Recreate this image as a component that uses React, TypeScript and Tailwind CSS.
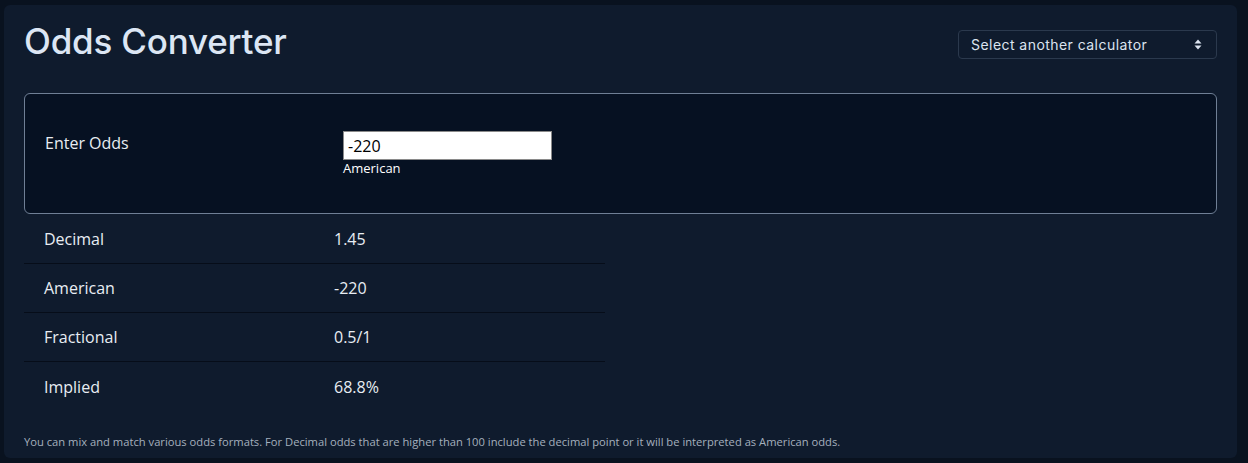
const rows = [
  { label: "Decimal", value: "1.45" },
  { label: "American", value: "-220" },
  { label: "Fractional", value: "0.5/1" },
  { label: "Implied", value: "68.8%" },
]

function SortIcon() {
  return (
    <svg width="8" height="11" viewBox="0 0 8 11" className="fill-[#dce4f0]">
      <path d="M4 0.5 L7.5 4.5 H0.5 Z" />
      <path d="M4 10.5 L7.5 6.5 H0.5 Z" />
    </svg>
  )
}

export default function App() {
  return (
    <div className="h-[463px] w-[1248px] bg-[#09121f] pb-[5px] pl-[4px] pr-[11px] pt-[5px] font-['Open_Sans',sans-serif]">
      <div className="h-full rounded-md bg-[#0f1b2d] px-5 pt-[18px]">
        {/* Header */}
        <div className="flex h-[70px] items-start justify-between">
          <h1 className="-mt-[1px] font-['Inter',sans-serif] text-[35px] font-medium leading-[38px] tracking-[-0.2px] text-[#dce6f4]">
            Odds Converter
          </h1>
          <div className="mt-[7px] flex h-[29px] w-[259px] items-center justify-between rounded border border-[#2b394d] pl-3 pr-[14px] font-['Inter',sans-serif] text-[14px] tracking-[0.45px] text-[#dce4f0]">
            <span>Select another calculator</span>
            <SortIcon />
          </div>
        </div>

        {/* Input panel */}
        <div className="h-[121px] rounded-md border border-[#6f7f95] bg-[#061122] px-5 pt-[37px]">
          <div className="flex">
            <div className="w-[298px] text-[16px] leading-6 text-[#e8edf3]">Enter Odds</div>
            <div className="flex flex-col">
              <input
                readOnly
                value="-220"
                className="h-[29px] w-[209px] border border-[#8a8a8a] bg-white px-1 font-['Open_Sans',sans-serif] text-[16px] text-black outline-none"
              />
              <span className="text-[13px] leading-4 text-white">American</span>
            </div>
          </div>
        </div>

        {/* Results */}
        <div className="w-[581px] pt-[1px]">
          {rows.map((r, i) => (
            <div
              key={r.label}
              className={`flex h-[49px] items-center pl-5 text-[16px] text-[#e8edf3] ${
                i < rows.length - 1 ? "border-b border-[#060d19]" : ""
              }`}
            >
              <div className="w-[290px]">{r.label}</div>
              <div>{r.value}</div>
            </div>
          ))}
        </div>

        <p className="mt-[23px] text-[11.2px] leading-[15px] text-[#a5b0be]">
          You can mix and match various odds formats. For Decimal odds that are higher than 100 include the decimal point or it will be interpreted as American odds.
        </p>
      </div>
    </div>
  )
}
